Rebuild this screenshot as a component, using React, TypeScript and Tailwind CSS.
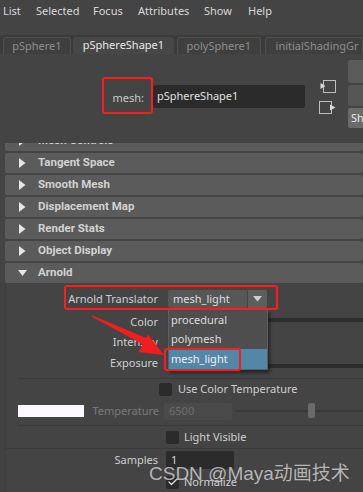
import { Check } from 'lucide-react'

const MENU = [
  { label: 'List', w: 'w-[33px]' },
  { label: 'Selected', w: 'w-[57px]' },
  { label: 'Focus', w: 'w-[45px]' },
  { label: 'Attributes', w: 'w-[66px]' },
  { label: 'Show', w: 'w-[44px]' },
  { label: 'Help', w: 'w-[40px]' },
]

const SECTIONS = ['Tangent Space', 'Smooth Mesh', 'Displacement Map', 'Render Stats', 'Object Display']

function Tri({ open }: { open?: boolean }) {
  return open ? (
    <svg width="9" height="7" viewBox="0 0 9 7" className="shrink-0"><path d="M0 0h9L4.5 6z" fill="#e6e6e6" /></svg>
  ) : (
    <svg width="7" height="10" viewBox="0 0 7 10" className="shrink-0"><path d="M0 0l6.5 5L0 10z" fill="#e6e6e6" /></svg>
  )
}

function SectionRow({ title, open }: { title: string; open?: boolean }) {
  return (
    <div className="h-[20px] bg-[#5b5b5b] rounded-[2px] flex items-center">
      <div className="w-[33px] flex justify-center pl-[2px]"><Tri open={open} /></div>
      <span className="text-[11.5px] font-bold text-[#d2d2d2]" style={{ fontFamily: 'Roboto, "Noto Sans", sans-serif' }}>{title}</span>
    </div>
  )
}

// label colonne de gauche, alignée à droite sur x=160
function Label({ children }: { children: string }) {
  return <span className="w-[153px] shrink-0 text-right pr-[1px] text-[11px] text-[#cfcfcf]">{children}</span>
}

export default function App() {
  return (
    <div className="relative w-[363px] h-[492px] overflow-hidden bg-[#444444] text-[#d4d4d4] text-[11px]" style={{ fontFamily: '"Noto Sans", "Open Sans", sans-serif' }}>
      {/* menu */}
      <div className="h-[22px] flex items-center pl-[3px] text-[11px] text-[#d8d8d8]">
        {MENU.map(m => <span key={m.label} className={`${m.w} shrink-0`}>{m.label}</span>)}
      </div>
      <div className="h-[13px]" />

      {/* tabs */}
      <div className="h-[19px] bg-[#3b3b3b] flex items-end pl-[3px] gap-[2px] text-[11px]">
        <div className="w-[69px] h-[17px] rounded-t-[3px] border border-b-0 border-[#4f4f4f] bg-[#3f3f3f] text-[#8e8e8e] flex items-center justify-center">pSphere1</div>
        <div className="w-[103px] h-[17px] rounded-t-[3px] bg-[#474747] text-[#e8e8e8] flex items-center justify-center">pSphereShape1</div>
        <div className="w-[85px] h-[17px] rounded-t-[3px] border border-b-0 border-[#4f4f4f] bg-[#3f3f3f] text-[#8e8e8e] flex items-center justify-center ml-[1px]">polySphere1</div>
        <div className="w-[100px] h-[17px] rounded-t-[3px] border border-b-0 border-[#4f4f4f] bg-[#3f3f3f] text-[#8e8e8e] flex items-center pl-[10px] ml-[2px] whitespace-nowrap overflow-hidden">initialShadingGr</div>
      </div>

      {/* header */}
      <div className="h-[89px] flex">
        <div className="w-[153px] shrink-0 flex items-start justify-end pt-[36px] pr-[9px]">
          <span className="text-[11px] text-[#c8c8c8]">mesh:</span>
        </div>
        <div className="pt-[31px]">
          <div className="w-[152px] h-[23px] bg-[#2b2b2b] rounded-[2px] flex items-center pl-[4px] text-[11px] text-[#e0e0e0]">pSphereShape1</div>
        </div>
        <div className="w-[41px] shrink-0 flex flex-col items-center pt-[26px] gap-[8px] pl-[4px]">
          <svg width="16" height="13" viewBox="0 0 16 13"><rect x="3.5" y="0.5" width="12" height="12" fill="none" stroke="#bdbdbd" /><path d="M0.5 3v6l5-3z" fill="#d8d8d8" /></svg>
          <svg width="17" height="13" viewBox="0 0 17 13"><rect x="0.5" y="0.5" width="12" height="12" fill="none" stroke="#bdbdbd" /><path d="M11 3.5v6l5.5-3z" fill="#d8d8d8" /></svg>
        </div>
        <div className="flex-1 flex flex-col pt-[6px] gap-[2px] pl-[2px]">
          <div className="h-[23px] bg-[#5a5a5a] rounded-l-[2px]" />
          <div className="h-[21px] bg-[#565656] rounded-l-[2px]" />
          <div className="h-[20px] bg-[#6b6b6b] rounded-l-[2px] text-[11px] text-[#e8e8e8] flex items-center pl-[3px]">Sh</div>
        </div>
      </div>

      {/* sections */}
      <div className="pl-[5px] flex flex-col gap-[2px]">
        <div className="h-[8px] overflow-hidden">
          <div className="-mt-[12px]"><SectionRow title="Mesh Controls" /></div>
        </div>
        {SECTIONS.map(s => <SectionRow key={s} title={s} />)}
        <SectionRow title="Arnold" open />
      </div>

      {/* arnold content */}
      <div className="flex">
        <div className="w-[6px] shrink-0 border-r border-[#3e3e3e] bg-[#424242]" />
        <div className="flex-1 flex flex-col">
          <div className="h-[6px]" />
          <div className="h-[20px] flex items-center">
            <Label>Arnold Translator</Label>
            <div className="ml-[9px] w-[99px] h-[18px] flex gap-[1px]">
              <div className="flex-1 bg-[#575757] rounded-l-[2px] text-[11px] text-[#dedede] flex items-center pl-[5px]">mesh_light</div>
              <div className="w-[19px] bg-[#5e5e5e] rounded-r-[2px] flex items-center justify-center">
                <svg width="9" height="6" viewBox="0 0 9 6"><path d="M0 0h9L4.5 5.5z" fill="#cfcfcf" /></svg>
              </div>
            </div>
          </div>
          <div className="h-[3px]" />
          <div className="h-[20px] flex items-center">
            <Label>Color</Label>
            <div className="ml-[108px] flex-1 h-[4px] bg-[#2d2d2d] -mt-[4px]" />
          </div>
          <div className="h-[21px] flex items-center">
            <Label>Intensity</Label>
          </div>
          <div className="h-[21px] flex items-center">
            <Label>Exposure</Label>
            <div className="ml-[108px] flex-1 h-[4px] bg-[#2d2d2d] mt-[4px]" />
          </div>
          <div className="h-[5px] border-b border-[#3b3b3b] ml-[12px]" />
          <div className="h-[21px] flex items-center">
            <div className="ml-[153px] w-[13px] h-[13px] bg-[#2b2b2b] rounded-[2px]" />
            <span className="ml-[6px] text-[11px] text-[#cfcfcf]">Use Color Temperature</span>
          </div>
          <div className="h-[22px] flex items-center">
            <div className="ml-[12px] w-[66px] h-[12px] bg-[#fdf8fd] shrink-0" />
            <span className="w-[75px] shrink-0 text-right text-[11px] text-[#7a7a7a]">Temperature</span>
            <div className="ml-[5px] w-[68px] h-[17px] shrink-0 bg-[#4a4a4a] rounded-[2px] text-[11px] text-[#6e6e6e] flex items-center pl-[5px]">6500</div>
            <div className="relative ml-[3px] flex-1 h-[2px] bg-[#3a3a3a]">
              <div className="absolute left-[73px] -top-[7px] w-[7px] h-[15px] bg-[#6b6b6b] rounded-[2px]" />
            </div>
          </div>
          <div className="h-[4px] border-b border-[#3b3b3b] ml-[12px]" />
          <div className="h-[23px] border-b border-[#3b3b3b] flex items-center">
            <div className="ml-[160px] w-[13px] h-[13px] bg-[#2b2b2b] rounded-[2px]" />
            <span className="ml-[5px] text-[11px] text-[#cfcfcf]">Light Visible</span>
          </div>
          <div className="h-[22px] flex items-center">
            <Label>Samples</Label>
            <div className="ml-[7px] w-[68px] h-[18px] bg-[#2b2b2b] rounded-[2px] text-[11px] text-[#dcdcdc] flex items-center pl-[5px]">1</div>
          </div>
          <div className="h-[22px] flex items-center">
            <div className="ml-[160px] w-[13px] h-[13px] bg-[#2b2b2b] rounded-[2px] flex items-center justify-center">
              <Check size={12} strokeWidth={2.5} className="text-[#dcdcdc]" />
            </div>
            <span className="ml-[5px] text-[11px] text-[#cfcfcf]">Normalize</span>
          </div>
        </div>
      </div>

      {/* liste déroulante ouverte */}
      <div className="absolute left-[168px] top-[309px] w-[100px] h-[61px] bg-[#4e4e4e] border border-[#5f5f5f] shadow-[2px_3px_3px_rgba(0,0,0,0.45)] flex flex-col text-[11px] text-[#dcdcdc]">
        <div className="h-[20px] flex items-center pl-[2px]">procedural</div>
        <div className="h-[20px] flex items-center pl-[2px]">polymesh</div>
        <div className="h-[20px] flex items-center pl-[2px] bg-[#5486a7] text-[#eef2f5]">mesh_light</div>
      </div>

      {/* annotations */}
      <div className="absolute left-[102px] top-[77px] w-[51px] h-[37px] border-2 border-[#ff1c1c] rounded-[3px]" />
      <div className="absolute left-[64px] top-[285px] w-[214px] h-[25px] border-2 border-[#ff1c1c] rounded-[3px]" />
      <div className="absolute left-[164px] top-[348px] w-[77px] h-[23px] border-2 border-[#ff1c1c] rounded-[3px]" />
      <svg className="absolute left-0 top-0" width="363" height="492" viewBox="0 0 363 492">
        <polygon points="91.5,316.5 92.5,315.5 148.5,339 144,345" fill="#f41d1d" />
        <polygon points="164,355 138.5,352 148,334.5" fill="#f41d1d" />
      </svg>

      {/* watermark */}
      <div className="absolute left-[149px] top-[460px] text-[19px] text-[rgba(235,235,235,0.72)] whitespace-nowrap" style={{ fontFamily: '"Liberation Sans", "Noto Sans CJK SC", sans-serif', textShadow: '0 0 1px rgba(0,0,0,0.3)' }}>
        CSDN @Maya动画技术
      </div>
    </div>
  )
}
